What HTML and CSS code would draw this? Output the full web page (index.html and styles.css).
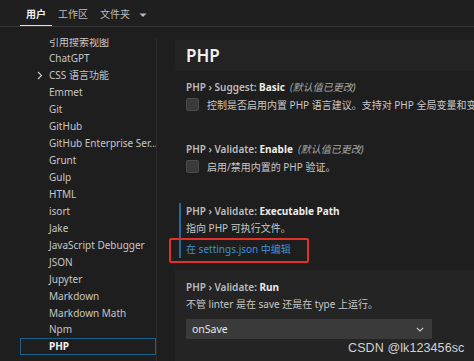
FILE: index.html
```html
<!DOCTYPE html>
<html lang="zh-CN">
<head>
<meta charset="utf-8">
<link rel="stylesheet" href="styles.css">
</head>
<body>
<div class="tabs">
  <div class="tab active">用户</div>
  <div class="tab">工作区</div>
  <div class="tab">文件夹</div>
  <svg class="caret" width="8" height="6" viewBox="0 0 8 6"><path d="M0.5 1.5 L4 5 L7.5 1.5 Z" fill="#bbbbbb"/></svg>
</div>
<div class="body">
  <nav class="toc">
    <ul class="toc-list">
      <li>引用搜索视图</li>
      <li>ChatGPT</li>
      <li class="group"><svg class="chev" width="6" height="9" viewBox="0 0 6 9"><path d="M1 1 L4.5 4.5 L1 8" fill="none" stroke="#cccccc" stroke-width="1.1"/></svg>CSS 语言功能</li>
      <li>Emmet</li>
      <li>Git</li>
      <li>GitHub</li>
      <li>GitHub Enterprise Ser...</li>
      <li>Grunt</li>
      <li>Gulp</li>
      <li>HTML</li>
      <li>isort</li>
      <li>Jake</li>
      <li>JavaScript Debugger</li>
      <li>JSON</li>
      <li>Jupyter</li>
      <li>Markdown</li>
      <li>Markdown Math</li>
      <li>Npm</li>
      <li class="selected">PHP</li>
    </ul>
  </nav>
  <main class="content">
    <div class="section-title">PHP</div>
    <div class="setting">
      <div class="s-title"><span class="cat">PHP › Suggest: </span><span class="key">Basic</span><span class="mod">(默认值已更改)</span></div>
      <div class="check-row"><span class="checkbox"></span><span class="desc">控制是否启用内置 PHP 语言建议。支持对 PHP 全局变量和变量进行建议。</span></div>
    </div>
    <div class="setting">
      <div class="s-title"><span class="cat">PHP › Validate: </span><span class="key">Enable</span><span class="mod">(默认值已更改)</span></div>
      <div class="check-row"><span class="checkbox"></span><span class="desc">启用/禁用内置的 PHP 验证。</span></div>
    </div>
    <div class="setting modified">
      <div class="s-title"><span class="cat">PHP › Validate: </span><span class="key">Executable Path</span></div>
      <div class="plain">指向 PHP 可执行文件。</div>
      <div class="link-wrap"><a class="link">在 settings.json 中编辑</a><span class="annot"></span></div>
    </div>
    <div class="setting focused">
      <div class="s-title"><span class="cat">PHP › Validate: </span><span class="key">Run</span></div>
      <div class="plain">不管 linter 是在 save 还是在 type 上运行。</div>
      <div class="select"><span>onSave</span><svg width="8" height="5" viewBox="0 0 8 5"><path d="M0.8 0.8 L4 4 L7.2 0.8" fill="none" stroke="#cccccc" stroke-width="1.1"/></svg></div>
    </div>
  </main>
</div>
<div class="watermark">CSDN @lk123456sc</div>
</body>
</html>
```
FILE: styles.css
```css
html, body {
  margin: 0;
  padding: 0;
}
body {
  width: 474px;
  height: 361px;
  overflow: hidden;
  background: #1e1e1e;
  color: #cccccc;
  font-family: "Noto Sans", "Noto Sans CJK SC", sans-serif;
  font-size: 10px;
  position: relative;
}
.tabs {
  height: 26px;
  border-bottom: 1px solid #353535;
  display: flex;
  align-items: stretch;
  padding-left: 20px;
  background: #1f1f1f;
}
.tab {
  padding: 0 6px;
  line-height: 29px;
  color: #bdbdbd;
  box-sizing: border-box;
}
.tab.active {
  color: #f0f0f0;
  font-weight: 600;
  border-bottom: 1px solid #e0e0e0;
}
.caret {
  align-self: center;
  margin-left: 3px;
  margin-top: 3px;
}
.body {
  display: flex;
  height: 334px;
}
.toc {
  width: 156px;
  border-right: 1px solid #2c2c2c;
  margin-top: 11px;
  overflow: hidden;
  flex: none;
  position: relative;
}
.toc-list {
  list-style: none;
  margin: -4.5px 0 0 0;
  padding: 0;
}
.toc-list li {
  height: 16.95px;
  line-height: 17px;
  padding-left: 49px;
  white-space: nowrap;
  color: #c6c6c6;
  position: relative;
  box-sizing: border-box;
}
.toc-list li.group .chev {
  position: absolute;
  left: 37px;
  top: 4px;
}
.toc-list li.selected {
  margin-left: 20px;
  padding-left: 28px;
  border: 1px solid #1b5f8c;
  font-weight: 700;
  color: #f2f2f2;
  line-height: 15px;
}
.content {
  flex: 1;
  overflow: hidden;
  position: relative;
}
.section-title {
  margin: 13px 0 0 18px;
  height: 31px;
  line-height: 31px;
  padding-left: 11px;
  background: #232323;
  color: #f0f0f0;
  font-size: 17px;
  font-weight: 600;
}
.setting {
  padding-left: 29px;
  margin-top: 30px;
  white-space: nowrap;
}
.section-title + .setting {
  margin-top: 8px;
}
.s-title {
  line-height: 17px;
  height: 17px;
  color: #bdbdbd;
}
.cat {
  font-weight: 600;
}
.key {
  font-weight: 700;
  color: #ececec;
}
.mod {
  font-style: italic;
  color: #a8a8a8;
  margin-left: 5px;
}
.check-row {
  display: flex;
  align-items: center;
  margin-top: 2px;
  height: 13px;
}
.checkbox {
  width: 11px;
  height: 11px;
  border: 1px solid #4a4a4a;
  background: #3a3a3a;
  border-radius: 2px;
  flex: none;
  margin-right: 8px;
}
.desc {
  color: #c8c8c8;
}
.setting.modified {
  margin-left: 22px;
  padding-left: 5px;
  border-left: 2px solid #1f6ea3;
  margin-top: 30px;
}
.plain {
  line-height: 17px;
  color: #c8c8c8;
}
.link-wrap {
  margin-top: 4px;
  line-height: 17px;
  position: relative;
}
.link {
  color: #3d8fd6;
}
.annot {
  position: absolute;
  left: -17px;
  top: -3px;
  width: 136px;
  height: 21px;
  border: 2px solid #e0312b;
  border-radius: 2px;
}
.setting.focused {
  margin: 12px 0 0 18px;
  padding: 9px 0 30px 11px;
  background: #242424;
}
.select {
  margin-top: 6px;
  width: 246px;
  height: 20px;
  background: #3a3a3a;
  display: flex;
  align-items: center;
  justify-content: space-between;
  padding: 0 8px 0 6px;
  box-sizing: border-box;
  color: #e6e6e6;
  font-size: 10.5px;
}
.watermark {
  position: absolute;
  left: 348px;
  top: 340px;
  font-family: "Liberation Sans", sans-serif;
  font-size: 12.5px;
  line-height: 16px;
  color: #d2d2d2;
  letter-spacing: 0.1px;
}
```
